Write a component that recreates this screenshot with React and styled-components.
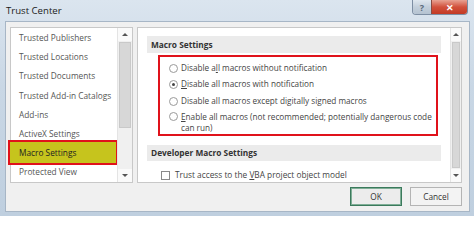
import React from "react";
import styled, { createGlobalStyle } from "styled-components";

const GlobalStyle = createGlobalStyle`
  html, body { margin: 0; padding: 0; }
  body {
    font-family: "Open Sans", "Noto Sans", "Liberation Sans", sans-serif;
    font-size: 8.3px;
    color: #333;
  }
`;

const Frame = styled.div`
  width: 474px;
  height: 216px;
  background: linear-gradient(180deg, #dbe5ef 0%, #c9d7e5 40%, #bfcfdf 100%);
  display: flex;
  flex-direction: column;
  overflow: hidden;
`;

const TitleBar = styled.div`
  height: 21px;
  flex: none;
  display: flex;
  align-items: flex-start;
  justify-content: space-between;
  padding-left: 6px;
  padding-right: 6px;
`;

const Title = styled.div`
  font-size: 9.6px;
  color: #1a1a1a;
  line-height: 21px;
`;

const Controls = styled.div`
  display: flex;
  height: 14px;
  border: 1px solid #7d8ea3;
  border-top: none;
  border-radius: 0 0 4px 4px;
  overflow: hidden;
`;

const CtrlButton = styled.div`
  width: ${(p) => p.$w}px;
  display: flex;
  align-items: center;
  justify-content: center;
  font-size: 9px;
  font-weight: bold;
  background: ${(p) =>
    p.$close
      ? "linear-gradient(180deg, #e8a293 0%, #d2513c 50%, #c23a25 100%)"
      : "linear-gradient(180deg, #dfe7ef 0%, #c3cfdb 50%, #b5c3d1 100%)"};
  color: ${(p) => (p.$close ? "#fff" : "#5a6a7a")};
  border-left: ${(p) => (p.$close ? "1px solid #8a4a40" : "none")};
`;

const Body = styled.div`
  flex: 1;
  margin: 0 4px 4px 5px;
  background: #f0f0f0;
  border: 1px solid #a7b6c6;
  display: flex;
  flex-direction: column;
  padding: 5px 7px 5px 4px;
  gap: 4px;
`;

const Panels = styled.div`
  display: flex;
  gap: 4px;
  height: 156px;
  flex: none;
`;

const ListBox = styled.div`
  width: 123px;
  background: #fff;
  border: 1px solid #c8c8c8;
  box-sizing: border-box;
  display: flex;
`;

const Items = styled.div`
  flex: 1;
  min-width: 0;
  display: flex;
  flex-direction: column;
`;

const Item = styled.div`
  height: 19.2px;
  line-height: 19.2px;
  padding-left: 8px;
  color: ${(p) => (p.$selected ? "#222" : "#555")};
  white-space: nowrap;
  ${(p) =>
    p.$selected &&
    `
    background: #c6c41d;
    outline: 2px solid #e0121b;
    outline-offset: -1px;
    margin: -2px 0 -2px -2px;
    padding-left: 10px;
    height: 23px;
    line-height: 23px;
  `}
`;

const Scroll = styled.div`
  width: ${(p) => p.$w}px;
  flex: none;
  background: #f0f0f0;
  border-left: 1px solid #e4e4e4;
  display: flex;
  flex-direction: column;
`;

const Arrow = styled.div`
  height: 13px;
  display: flex;
  align-items: center;
  justify-content: center;
  background: #fafafa;
  &::after {
    content: "";
    border-left: 3px solid transparent;
    border-right: 3px solid transparent;
    ${(p) =>
      p.$down ? "border-top: 3px solid #555;" : "border-bottom: 3px solid #555;"}
  }
`;

const Track = styled.div`
  flex: 1;
  display: flex;
  flex-direction: column;
`;

const Thumb = styled.div`
  height: ${(p) => p.$h}px;
  margin: 1px 1px;
  background: #d7d7d7;
  border: 1px solid #c9c9c9;
`;

const Content = styled.div`
  flex: 1;
  background: #fff;
  border: 1px solid #c8c8c8;
  box-sizing: border-box;
  display: flex;
`;

const Pane = styled.div`
  flex: 1;
  padding: 8px 9px 0 9px;
  display: flex;
  flex-direction: column;
`;

const SectionHead = styled.div`
  height: 17px;
  line-height: 17px;
  background: #ebebeb;
  font-weight: bold;
  color: #333;
  padding-left: 4px;
`;

const RedBox = styled.div`
  margin: 2px 3px 0 11px;
  border: 2px solid #e0121b;
  padding: 3px 0 0 9px;
  display: flex;
  flex-direction: column;
  font-size: 8.2px;
`;

const Option = styled.div`
  display: flex;
  align-items: flex-start;
  gap: 3px;
  line-height: ${(p) => (p.$tight ? 11.4 : 16.4)}px;
  margin-top: ${(p) => (p.$tight ? 1.5 : 0)}px;
  color: #444;
`;

const Lines = styled.div`
  display: flex;
  flex-direction: column;
  white-space: nowrap;
`;

const Radio = styled.span`
  flex: none;
  box-sizing: border-box;
  width: 9px;
  height: 9px;
  margin-top: ${(p) => (p.$first ? 1.5 : 4)}px;
  border: 1px solid #9a9a9a;
  border-radius: 50%;
  background: #fff;
  display: flex;
  align-items: center;
  justify-content: center;
  &::after {
    content: "";
    width: 3px;
    height: 3px;
    border-radius: 50%;
    background: ${(p) => (p.$checked ? "#444" : "transparent")};
  }
`;

const Check = styled.span`
  flex: none;
  box-sizing: border-box;
  width: 9px;
  height: 9px;
  margin-top: 4px;
  border: 1px solid #8a8a8a;
  background: #fff;
`;

const CheckRow = styled(Option)`
  margin: 6px 0 0 14px;
  gap: 5px;
`;

const Dev = styled(SectionHead)`
  margin-top: 9px;
  height: 16px;
  line-height: 16px;
`;

const Footer = styled.div`
  display: flex;
  justify-content: flex-end;
  gap: 8px;
`;

const Button = styled.div`
  width: 52px;
  height: 19px;
  box-sizing: border-box;
  line-height: 17px;
  text-align: center;
  color: #333;
  background: ${(p) => (p.$default ? "#ececec" : "#f3f3f3")};
  border: 1px solid ${(p) => (p.$default ? "#3b7a5c" : "#b4b4b4")};
  ${(p) => p.$default && "box-shadow: inset 0 0 0 1px #7fae96;"}
`;

const Key = styled.u`
  text-decoration-thickness: 1px;
`;

const items = [
  "Trusted Publishers",
  "Trusted Locations",
  "Trusted Documents",
  "Trusted Add-in Catalogs",
  "Add-ins",
  "ActiveX Settings",
  "Macro Settings",
  "Protected View",
];

export default function App() {
  return (
    <>
      <GlobalStyle />
      <Frame>
        <TitleBar>
          <Title>Trust Center</Title>
          <Controls>
            <CtrlButton $w={18}>?</CtrlButton>
            <CtrlButton $w={35} $close>
              ✕
            </CtrlButton>
          </Controls>
        </TitleBar>
        <Body>
          <Panels>
            <ListBox>
              <Items>
                {items.map((it) => (
                  <Item key={it} $selected={it === "Macro Settings"}>
                    {it}
                  </Item>
                ))}
              </Items>
              <Scroll $w={14}>
                <Arrow />
                <Track>
                  <Thumb $h={84} />
                </Track>
                <Arrow $down />
              </Scroll>
            </ListBox>
            <Content>
              <Pane>
                <SectionHead>Macro Settings</SectionHead>
                <RedBox>
                  <Option>
                    <Radio />
                    <span>Disable a<Key>l</Key>l macros without notification</span>
                  </Option>
                  <Option>
                    <Radio $checked />
                    <span><Key>D</Key>isable all macros with notification</span>
                  </Option>
                  <Option>
                    <Radio />
                    <span>Disable all macros except di<Key>g</Key>itally signed macros</span>
                  </Option>
                  <Option $tight>
                    <Radio $first />
                    <Lines>
                      <span>
                        <Key>E</Key>nable all macros (not recommended; potentially dangerous code
                      </span>
                      <span>can run)</span>
                    </Lines>
                  </Option>
                </RedBox>
                <Dev>Developer Macro Settings</Dev>
                <CheckRow>
                  <Check />
                  <span>Trust access to the <Key>V</Key>BA project object model</span>
                </CheckRow>
              </Pane>
              <Scroll $w={10}>
                <Arrow />
                <Track>
                  <Thumb $h={124} />
                </Track>
                <Arrow $down />
              </Scroll>
            </Content>
          </Panels>
          <Footer>
            <Button $default>OK</Button>
            <Button>Cancel</Button>
          </Footer>
        </Body>
      </Frame>
    </>
  );
}
